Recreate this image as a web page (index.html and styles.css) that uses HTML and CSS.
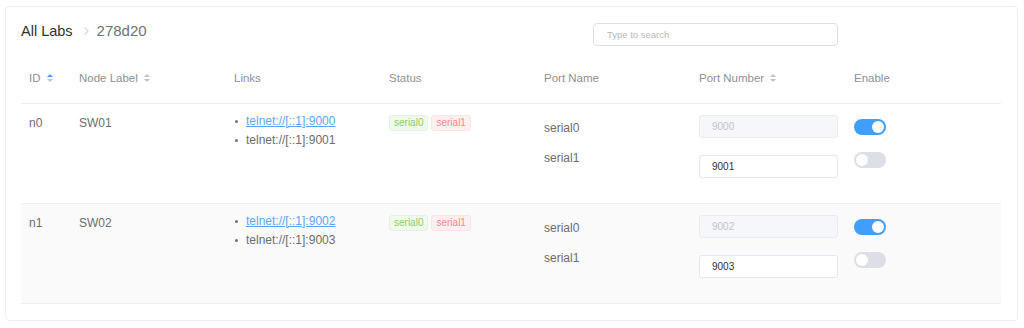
FILE: index.html
```html
<!DOCTYPE html>
<html>
<head>
<meta charset="utf-8">
<link rel="stylesheet" href="styles.css">
</head>
<body>
<div class="page">
  <div class="card">
    <div class="topbar">
      <div class="crumbs">
        <span class="crumb-root">All Labs</span>
        <svg class="crumb-sep" width="5" height="8" viewBox="0 0 5 8"><polyline points="0.5,0.5 4.3,4 0.5,7.5" fill="none" stroke="#c0c4cc" stroke-width="1"/></svg>
        <span class="crumb-cur">278d20</span>
      </div>
      <div class="search">Type to search</div>
    </div>
    <div class="table">
      <div class="thead">
        <div class="cell th">ID <svg class="caret" width="6" height="8" viewBox="0 0 6 8"><polygon points="0,3 3,0 6,3" fill="#409eff"/><polygon points="0,5 6,5 3,8" fill="#c0c4cc"/></svg></div>
        <div class="cell th">Node Label <svg class="caret" width="6" height="8" viewBox="0 0 6 8"><polygon points="0,3 3,0 6,3" fill="#c0c4cc"/><polygon points="0,5 6,5 3,8" fill="#c0c4cc"/></svg></div>
        <div class="cell th">Links</div>
        <div class="cell th">Status</div>
        <div class="cell th">Port Name</div>
        <div class="cell th">Port Number <svg class="caret" width="6" height="8" viewBox="0 0 6 8"><polygon points="0,3 3,0 6,3" fill="#c0c4cc"/><polygon points="0,5 6,5 3,8" fill="#c0c4cc"/></svg></div>
        <div class="cell th">Enable</div>
      </div>

      <div class="row">
        <div class="cell c-text">n0</div>
        <div class="cell c-text">SW01</div>
        <div class="cell c-links">
          <ul class="links">
            <li><a class="link">telnet://[::1]:9000</a></li>
            <li>telnet://[::1]:9001</li>
          </ul>
        </div>
        <div class="cell c-status"><span class="tag tag-ok">serial0</span><span class="tag tag-bad">serial1</span></div>
        <div class="cell c-ports"><div class="pname">serial0</div><div class="pname pname2">serial1</div></div>
        <div class="cell c-nums"><div class="num disabled">9000</div><div class="num active">9001</div></div>
        <div class="cell c-enable"><div class="switch on"><span class="knob"></span></div><div class="switch off second"><span class="knob"></span></div></div>
      </div>

      <div class="row striped">
        <div class="cell c-text">n1</div>
        <div class="cell c-text">SW02</div>
        <div class="cell c-links">
          <ul class="links">
            <li><a class="link">telnet://[::1]:9002</a></li>
            <li>telnet://[::1]:9003</li>
          </ul>
        </div>
        <div class="cell c-status"><span class="tag tag-ok">serial0</span><span class="tag tag-bad">serial1</span></div>
        <div class="cell c-ports"><div class="pname">serial0</div><div class="pname pname2">serial1</div></div>
        <div class="cell c-nums"><div class="num disabled">9002</div><div class="num active">9003</div></div>
        <div class="cell c-enable"><div class="switch on"><span class="knob"></span></div><div class="switch off second"><span class="knob"></span></div></div>
      </div>
    </div>
  </div>
</div>
</body>
</html>
```

FILE: styles.css
```css
* { box-sizing: border-box; }
html, body { margin: 0; padding: 0; background: #fff; }
body { font-family: "Liberation Sans", Arial, sans-serif; color: #6b6d71; }

.page { padding: 6px 6px 0 5px; }

.card {
  width: 1013px;
  border: 1px solid #ebeef5;
  border-radius: 4px;
  padding: 16px 16px 16px 15px;
  background: #fff;
}

.topbar {
  display: flex;
  justify-content: space-between;
  align-items: flex-start;
  height: 24px;
}
.crumbs { display: flex; align-items: center; height: 16px; line-height: 16px; }
.crumb-root { font-size: 14.5px; color: #303133; }
.crumb-sep { margin: 0 8px 0 11px; }
.crumb-cur { font-size: 15px; color: #707276; }

.search {
  width: 245px;
  height: 23px;
  margin-right: 163px;
  border: 1px solid #dcdfe6;
  border-radius: 4px;
  padding-left: 13px;
  font-size: 9.5px;
  line-height: 21px;
  color: #b4b8bf;
}

.table { width: 980px; }
.thead, .row {
  display: grid;
  grid-template-columns: 50px repeat(6, 155px);
  border-bottom: 1px solid #ebeef5;
}
.thead { height: 57px; align-items: start; }
.row { height: 100px; align-items: start; }
.row.striped { background: #fafafa; }

.cell { padding: 0 8px; }
.th {
  padding-top: 23px;
  font-size: 11.5px;
  line-height: 16px;
  color: #8e9095;
  display: flex;
  align-items: center;
}
.caret { margin-left: 6px; }

.c-text { padding-top: 10px; font-size: 12px; line-height: 18px; }

.c-links { padding-top: 8px; }
.links { list-style: none; margin: 0; padding: 0; font-size: 12px; line-height: 19px; }
.links li { position: relative; padding-left: 12px; white-space: nowrap; }
.links li::before {
  content: "";
  position: absolute;
  left: 1px;
  top: 8px;
  width: 3px;
  height: 3px;
  border-radius: 50%;
  background: #707276;
}
.link { color: #5aa6ff; text-decoration: underline; }

.c-status { padding-top: 11px; display: flex; gap: 3px; }
.tag {
  display: inline-block;
  height: 16px;
  line-height: 14px;
  padding: 0 4px;
  border-radius: 3px;
  font-size: 10px;
  border: 1px solid;
}
.tag-ok { color: #8acc6c; background: #f0f9eb; border-color: #e4f4dc; }
.tag-bad { color: #f48a8a; background: #fef0f0; border-color: #fde4e4; }

.c-ports { padding-top: 16px; font-size: 12px; line-height: 16px; }
.pname2 { margin-top: 14px; }

.c-nums { padding-top: 11px; }
.num {
  width: 139px;
  height: 23px;
  border: 1px solid #e4e7ed;
  border-radius: 3px;
  padding-left: 12px;
  font-size: 10px;
  line-height: 21px;
}
.num.disabled { background: #f5f7fa; border-color: #e8ebf0; color: #c0c4cc; }
.num.active { background: #fff; color: #2e3033; font-weight: normal; margin-top: 17px; }

.c-enable { padding-top: 15px; }
.switch {
  position: relative;
  width: 32px;
  height: 16px;
  border-radius: 8px;
}
.switch.on { background: #409eff; }
.switch.off { background: #dcdfe6; }
.switch.second { margin-top: 17px; }
.knob {
  position: absolute;
  top: 2px;
  width: 12px;
  height: 12px;
  border-radius: 50%;
  background: #fff;
}
.switch.on .knob { left: 18px; }
.switch.off .knob { left: 2px; }
```
